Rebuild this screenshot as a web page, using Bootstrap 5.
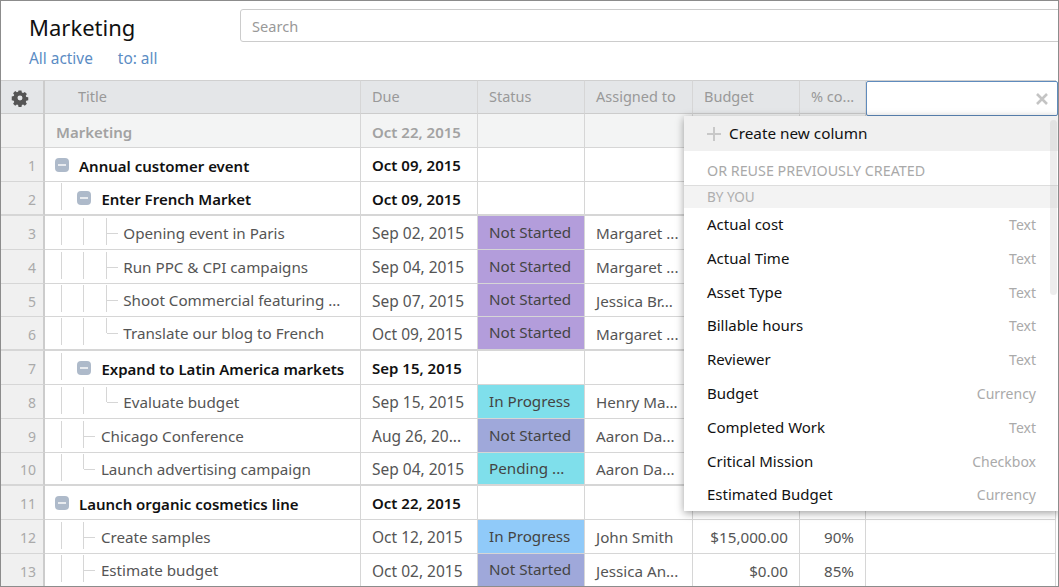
<!DOCTYPE html>
<html lang="en">
<head>
<meta charset="utf-8">
<title>Marketing</title>
<link href="https://cdn.jsdelivr.net/npm/bootstrap@5.3.0/dist/css/bootstrap.min.css" rel="stylesheet">
<style>
html,body{margin:0;height:587px;overflow:hidden;background:#fff}
body{font-family:"Noto Sans","Open Sans",sans-serif;font-size:15.2px;color:#555}
.frame{height:587px;border:1px solid #8c8c8c;position:relative;overflow:hidden}
.topbar{height:79px;position:relative}
.sheet-title{font-size:22px;font-weight:400;color:#111;line-height:32px;margin:0;width:239px;padding:10px 0 0 28px}
.filters{padding:6px 0 0 28px;color:#5b8cc4;font-size:15.4px;line-height:20px;gap:25px}
.search-wrap{padding-top:8px;flex:1;overflow:hidden}
.search-box{width:900px;height:33px;border:1px solid #ccc;border-radius:3px;padding:0 11px;font-size:14.6px;color:#999;background:#fff;line-height:33px}
.gridtable{table-layout:fixed;width:1055px;border-collapse:separate;border-spacing:0;margin:0;font-size:15.2px;color:#555;--bs-table-bg:transparent}
.gridtable th,.gridtable td{padding:0 11px;height:34px;border-style:solid;border-color:#d6d6d6;border-width:0 1px 1px 0;white-space:nowrap;overflow:hidden;vertical-align:middle;font-weight:400;color:#555;box-shadow:none}
.gridtable td{padding-top:2px}
.gridtable thead th{height:34px;background:#e4e6e8;color:#999;border-top:1px solid #d0d0d0;border-bottom-color:#ccc;font-size:14.5px}
.gridtable thead th.newcol{background:#e4e6e8;border-width:1px 0 0 0;padding:0;overflow:visible;vertical-align:top}
.gridtable tr.thin>*{height:33px}
.gridtable .numcell{background:#f0f0f0;color:#aaa;text-align:right;padding:2px 7px 0 0;border-right:2px solid #ccc;font-size:14px}
.gridtable thead .numcell{background:#e4e6e8;text-align:left;padding:0 0 0 9px}
.gridtable .groupcell{background:#f3f4f4;color:#a2a2a2;font-weight:600;font-size:15px;padding-top:4px}
.gridtable .grp>*{color:#111;font-weight:600;font-size:15px}
.gridtable .grp>.numcell{color:#aaa;font-weight:400;font-size:14px}
.gridtable .sep>*{border-bottom-width:2px;border-bottom-color:#d6d6d6}
.gridtable .money{text-align:right}
.gridtable td.pill{color:#444;padding-top:0;padding-bottom:1px}
.gridtable td.dat{font-size:15.5px;padding-top:3px}
.gridtable td.violet{background:#b39ddb}
.gridtable td.cyan{background:#7fdfeb}
.gridtable td.peri{background:#9fa8da}
.gridtable td.sky{background:#90caf9}
.gridtable td.tree{padding:0 11px}
.treecell{height:27px;padding-left:5px;margin-bottom:3px;line-height:31px}
.grp .treecell{line-height:32px}
.gd{display:block;flex:0 0 22.4px;height:27px;border-left:1px solid #d6d6d6;position:relative}
.gd.last{flex-basis:17.5px}
.gd.tee::after,.gd.end::after{content:"";position:absolute;left:0;top:15px;width:11px;border-top:1px solid #d6d6d6}
.gd.end{height:15px}
.tog{flex:0 0 14px;width:14px;height:14px;border-radius:4px;background:#aebaca;position:relative;margin:8px 10px 0 -6px}
.tog::after{content:"";position:absolute;left:3px;right:3px;top:6px;height:2px;background:#e8ebef}
.editor{height:35px;border:1px solid #5f8bbd;border-radius:2px;position:relative;background:#fff;width:192px;margin-bottom:-3px;z-index:2}
.editor svg{position:absolute;right:8px;top:10px}
.picker{position:absolute;left:683px;top:115px;width:375px;height:395px;background:#fff;box-shadow:0 2px 8px rgba(0,0,0,.38);overflow:hidden;z-index:5;color:#111;font-size:15px}
.picker-new{height:35px;background:#f0f0f0;padding-left:23px;gap:8px;line-height:35px;color:#111;font-size:15.3px}
.picker-lbl{height:34px;line-height:39px;padding-left:23px;color:#a9a9a9;font-size:14.3px}
.picker-sub{height:23px;line-height:22px;padding-left:23px;background:#f3f3f3;border-top:1px solid #ddd;color:#aeaeae;font-size:13.5px}
.picker .list-group-item{height:33.8px;padding:0 23px 0 23px;border:0;background:transparent;color:#111;font-size:15px;line-height:33.8px}
.picker .kind{color:#aaa;font-size:14px}
.scrolltrack{position:absolute;right:2px;top:4px;width:7px;height:175px;background:rgba(190,190,190,.27);border-radius:4px;z-index:1}
</style>
</head>
<body>
<div class="frame">
  <div class="topbar d-flex">
    <div>
      <h1 class="sheet-title">Marketing</h1>
      <div class="filters d-flex"><span>All active</span><span>to: all</span></div>
    </div>
    <div class="search-wrap"><div class="search-box">Search</div></div>
  </div>
  <table class="table table-borderless gridtable">
    <colgroup><col style="width:44px"><col style="width:316px"><col style="width:117px"><col style="width:107px"><col style="width:108px"><col style="width:107px"><col style="width:66px"><col style="width:190px"></colgroup>
    <thead>
      <tr>
        <th class="numcell"><svg width="20" height="20" viewBox="0 0 20 20" aria-hidden="true"><path fill="#555" fill-rule="evenodd" d="M8.3 1.6h3.4l.5 2.3 1.4.6 2-1.3 2.4 2.4-1.3 2 .6 1.4 2.3.5v3.4l-2.3.5-.6 1.4 1.3 2-2.4 2.4-2-1.3-1.4.6-.5 2.3H8.3l-.5-2.3-1.4-.6-2 1.3-2.4-2.4 1.3-2-.6-1.4-2.3-.5V8.5l2.3-.5.6-1.4-1.3-2 2.4-2.4 2 1.3 1.4-.6zM10 7.2a2.9 2.9 0 1 0 0 5.8 2.9 2.9 0 0 0 0-5.8z" transform="translate(1.4 1.2) scale(.86)"/></svg></th>
        <th style="padding-left:33px">Title</th><th>Due</th><th>Status</th><th>Assigned to</th><th>Budget</th><th>% co...</th>
        <th class="newcol"><div class="editor"><svg width="14" height="14" viewBox="0 0 14 14" aria-hidden="true"><path d="M2 2l10 10M12 2L2 12" stroke="#c4c4c4" stroke-width="2.6" fill="none"/></svg></div></th>
      </tr>
    </thead>
    <tbody>
      <tr><td class="numcell"></td><td class="groupcell">Marketing</td><td class="groupcell">Oct 22, 2015</td><td class="groupcell"></td><td class="groupcell"></td><td class="groupcell"></td><td class="groupcell"></td><td class="groupcell"></td></tr>
      <tr class="grp"><td class="numcell">1</td><td class="tree"><div class="d-flex align-items-start treecell"><span class="tog"></span>Annual customer event</div></td><td>Oct 09, 2015</td><td></td><td></td><td></td><td></td><td></td></tr>
      <tr class="grp sep"><td class="numcell">2</td><td class="tree"><div class="d-flex align-items-start treecell"><span class="gd"></span><span class="tog"></span>Enter French Market</div></td><td>Oct 09, 2015</td><td></td><td></td><td></td><td></td><td></td></tr>
      <tr><td class="numcell">3</td><td class="tree"><div class="d-flex align-items-start treecell"><span class="gd"></span><span class="gd"></span><span class="gd last tee"></span>Opening event in Paris</div></td><td class="dat">Sep 02, 2015</td><td class="pill violet">Not Started</td><td>Margaret ...</td><td></td><td></td><td></td></tr>
      <tr><td class="numcell">4</td><td class="tree"><div class="d-flex align-items-start treecell"><span class="gd"></span><span class="gd"></span><span class="gd last tee"></span>Run PPC &amp; CPI campaigns</div></td><td class="dat">Sep 04, 2015</td><td class="pill violet">Not Started</td><td>Margaret ...</td><td></td><td></td><td></td></tr>
      <tr class="thin"><td class="numcell">5</td><td class="tree"><div class="d-flex align-items-start treecell"><span class="gd"></span><span class="gd"></span><span class="gd last tee"></span>Shoot Commercial featuring ...</div></td><td class="dat">Sep 07, 2015</td><td class="pill violet">Not Started</td><td>Jessica Br...</td><td></td><td></td><td></td></tr>
      <tr class="sep"><td class="numcell">6</td><td class="tree"><div class="d-flex align-items-start treecell"><span class="gd"></span><span class="gd"></span><span class="gd last end"></span>Translate our blog to French</div></td><td class="dat">Oct 09, 2015</td><td class="pill violet">Not Started</td><td>Margaret ...</td><td></td><td></td><td></td></tr>
      <tr class="grp"><td class="numcell">7</td><td class="tree"><div class="d-flex align-items-start treecell"><span class="gd"></span><span class="tog"></span>Expand to Latin America markets</div></td><td>Sep 15, 2015</td><td></td><td></td><td></td><td></td><td></td></tr>
      <tr><td class="numcell">8</td><td class="tree"><div class="d-flex align-items-start treecell"><span class="gd"></span><span class="gd"></span><span class="gd last end"></span>Evaluate budget</div></td><td class="dat">Sep 15, 2015</td><td class="pill cyan">In Progress</td><td>Henry Ma...</td><td></td><td></td><td></td></tr>
      <tr><td class="numcell">9</td><td class="tree"><div class="d-flex align-items-start treecell"><span class="gd"></span><span class="gd last tee"></span>Chicago Conference</div></td><td class="dat">Aug 26, 20...</td><td class="pill peri">Not Started</td><td>Aaron Da...</td><td></td><td></td><td></td></tr>
      <tr class="thin sep"><td class="numcell">10</td><td class="tree"><div class="d-flex align-items-start treecell"><span class="gd"></span><span class="gd last end"></span>Launch advertising campaign</div></td><td class="dat">Sep 04, 2015</td><td class="pill cyan">Pending ...</td><td>Aaron Da...</td><td></td><td></td><td></td></tr>
      <tr class="grp"><td class="numcell">11</td><td class="tree"><div class="d-flex align-items-start treecell"><span class="tog"></span>Launch organic cosmetics line</div></td><td>Oct 22, 2015</td><td></td><td></td><td></td><td></td><td></td></tr>
      <tr><td class="numcell">12</td><td class="tree"><div class="d-flex align-items-start treecell"><span class="gd"></span><span class="gd last tee"></span>Create samples</div></td><td class="dat">Oct 12, 2015</td><td class="pill sky">In Progress</td><td>John Smith</td><td class="money">$15,000.00</td><td class="money">90%</td><td></td></tr>
      <tr class="thin"><td class="numcell">13</td><td class="tree"><div class="d-flex align-items-start treecell"><span class="gd"></span><span class="gd last tee"></span>Estimate budget</div></td><td class="dat">Oct 02, 2015</td><td class="pill peri">Not Started</td><td>Jessica An...</td><td class="money">$0.00</td><td class="money">85%</td><td></td></tr>
    </tbody>
  </table>
  <div class="picker">
    <div class="scrolltrack"></div>
    <div class="picker-new d-flex align-items-center"><svg width="14" height="14" viewBox="0 0 14 14" aria-hidden="true"><path d="M7 0v14M0 7h14" stroke="#c8c8c8" stroke-width="2" fill="none"/></svg><span>Create new column</span></div>
    <div class="picker-lbl">OR REUSE PREVIOUSLY CREATED</div>
    <div class="picker-sub">BY YOU</div>
    <div class="list-group list-group-flush">
      <div class="list-group-item d-flex justify-content-between"><span>Actual cost</span><span class="kind">Text</span></div>
      <div class="list-group-item d-flex justify-content-between"><span>Actual Time</span><span class="kind">Text</span></div>
      <div class="list-group-item d-flex justify-content-between"><span>Asset Type</span><span class="kind">Text</span></div>
      <div class="list-group-item d-flex justify-content-between"><span>Billable hours</span><span class="kind">Text</span></div>
      <div class="list-group-item d-flex justify-content-between"><span>Reviewer</span><span class="kind">Text</span></div>
      <div class="list-group-item d-flex justify-content-between"><span>Budget</span><span class="kind">Currency</span></div>
      <div class="list-group-item d-flex justify-content-between"><span>Completed Work</span><span class="kind">Text</span></div>
      <div class="list-group-item d-flex justify-content-between"><span>Critical Mission</span><span class="kind">Checkbox</span></div>
      <div class="list-group-item d-flex justify-content-between"><span>Estimated Budget</span><span class="kind">Currency</span></div>
    </div>
  </div>
</div>
<script src="https://cdn.jsdelivr.net/npm/bootstrap@5.3.0/dist/js/bootstrap.bundle.min.js"></script>
</body>
</html>
